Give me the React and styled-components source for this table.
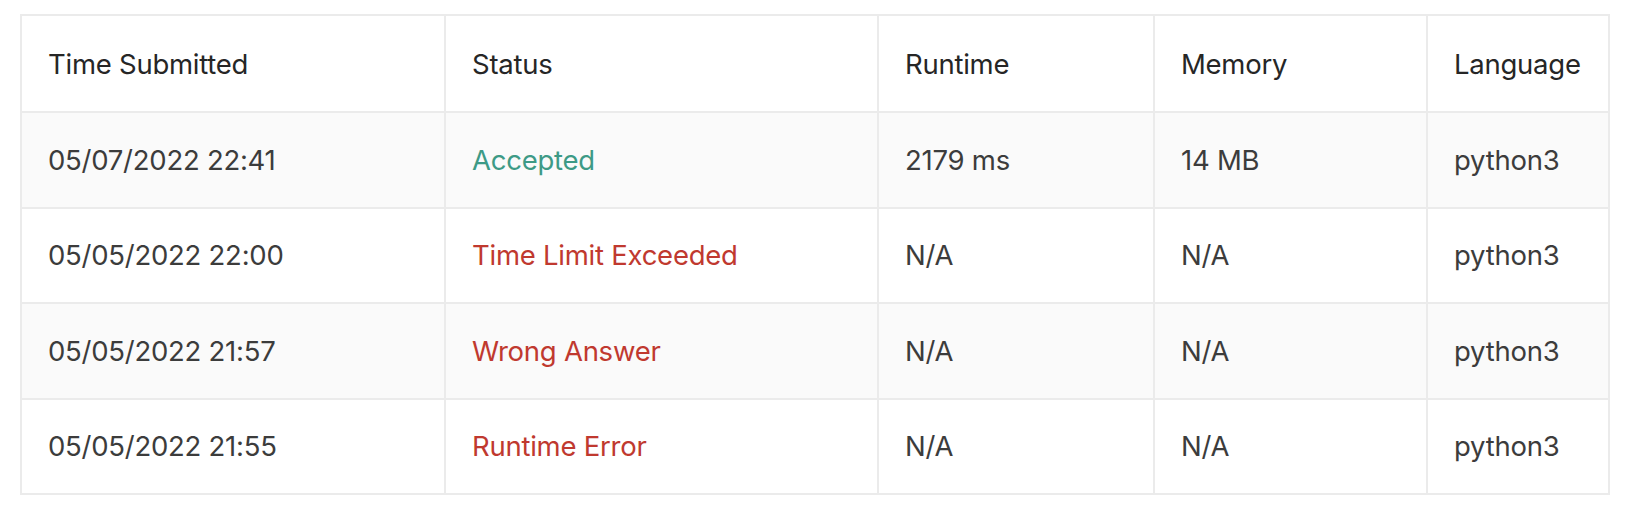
import React from "react";
import styled, { createGlobalStyle } from "styled-components";

const Global = createGlobalStyle`
  html, body { margin: 0; padding: 0; background: #ffffff; }
  body { font-family: Inter, "Noto Sans", "Liberation Sans", sans-serif; }
`;

const Page = styled.div`
  padding: 14px 18px 0 20px;
`;

const Table = styled.table`
  width: 1588px;
  border-collapse: collapse;
  table-layout: fixed;
  border: 2px solid #ebebeb;
  font-size: 27.5px;
  letter-spacing: -0.25px;
`;

const HeadCell = styled.th`
  height: 95px;
  padding: 0 0 0 26px;
  text-align: left;
  font-weight: 400;
  color: #262626;
  border: 2px solid #ebebeb;
`;

const Row = styled.tr`
  background: ${(p) => (p.$striped ? "#fafafa" : "#ffffff")};
`;

const Cell = styled.td`
  height: 93.5px;
  padding: 0 0 0 26px;
  color: #3c3c3c;
  border: 2px solid #ebebeb;
  white-space: nowrap;
`;

const Status = styled.span`
  color: ${(p) => (p.$ok ? "#3d9a86" : "#c0392f")};
`;

const columns = [
  { label: "Time Submitted", width: 424 },
  { label: "Status", width: 433 },
  { label: "Runtime", width: 276 },
  { label: "Memory", width: 273 },
  { label: "Language", width: 182 },
];

const rows = [
  { time: "05/07/2022 22:41", status: "Accepted", ok: true, runtime: "2179 ms", memory: "14 MB", lang: "python3" },
  { time: "05/05/2022 22:00", status: "Time Limit Exceeded", ok: false, runtime: "N/A", memory: "N/A", lang: "python3" },
  { time: "05/05/2022 21:57", status: "Wrong Answer", ok: false, runtime: "N/A", memory: "N/A", lang: "python3" },
  { time: "05/05/2022 21:55", status: "Runtime Error", ok: false, runtime: "N/A", memory: "N/A", lang: "python3" },
];

export default function App() {
  return (
    <Page>
      <Global />
      <Table>
        <colgroup>
          {columns.map((c) => (
            <col key={c.label} style={{ width: c.width }} />
          ))}
        </colgroup>
        <thead>
          <tr>
            {columns.map((c) => (
              <HeadCell key={c.label}>{c.label}</HeadCell>
            ))}
          </tr>
        </thead>
        <tbody>
          {rows.map((r, i) => (
            <Row key={i} $striped={i % 2 === 0}>
              <Cell>{r.time}</Cell>
              <Cell>
                <Status $ok={r.ok}>{r.status}</Status>
              </Cell>
              <Cell>{r.runtime}</Cell>
              <Cell>{r.memory}</Cell>
              <Cell>{r.lang}</Cell>
            </Row>
          ))}
        </tbody>
      </Table>
    </Page>
  );
}
